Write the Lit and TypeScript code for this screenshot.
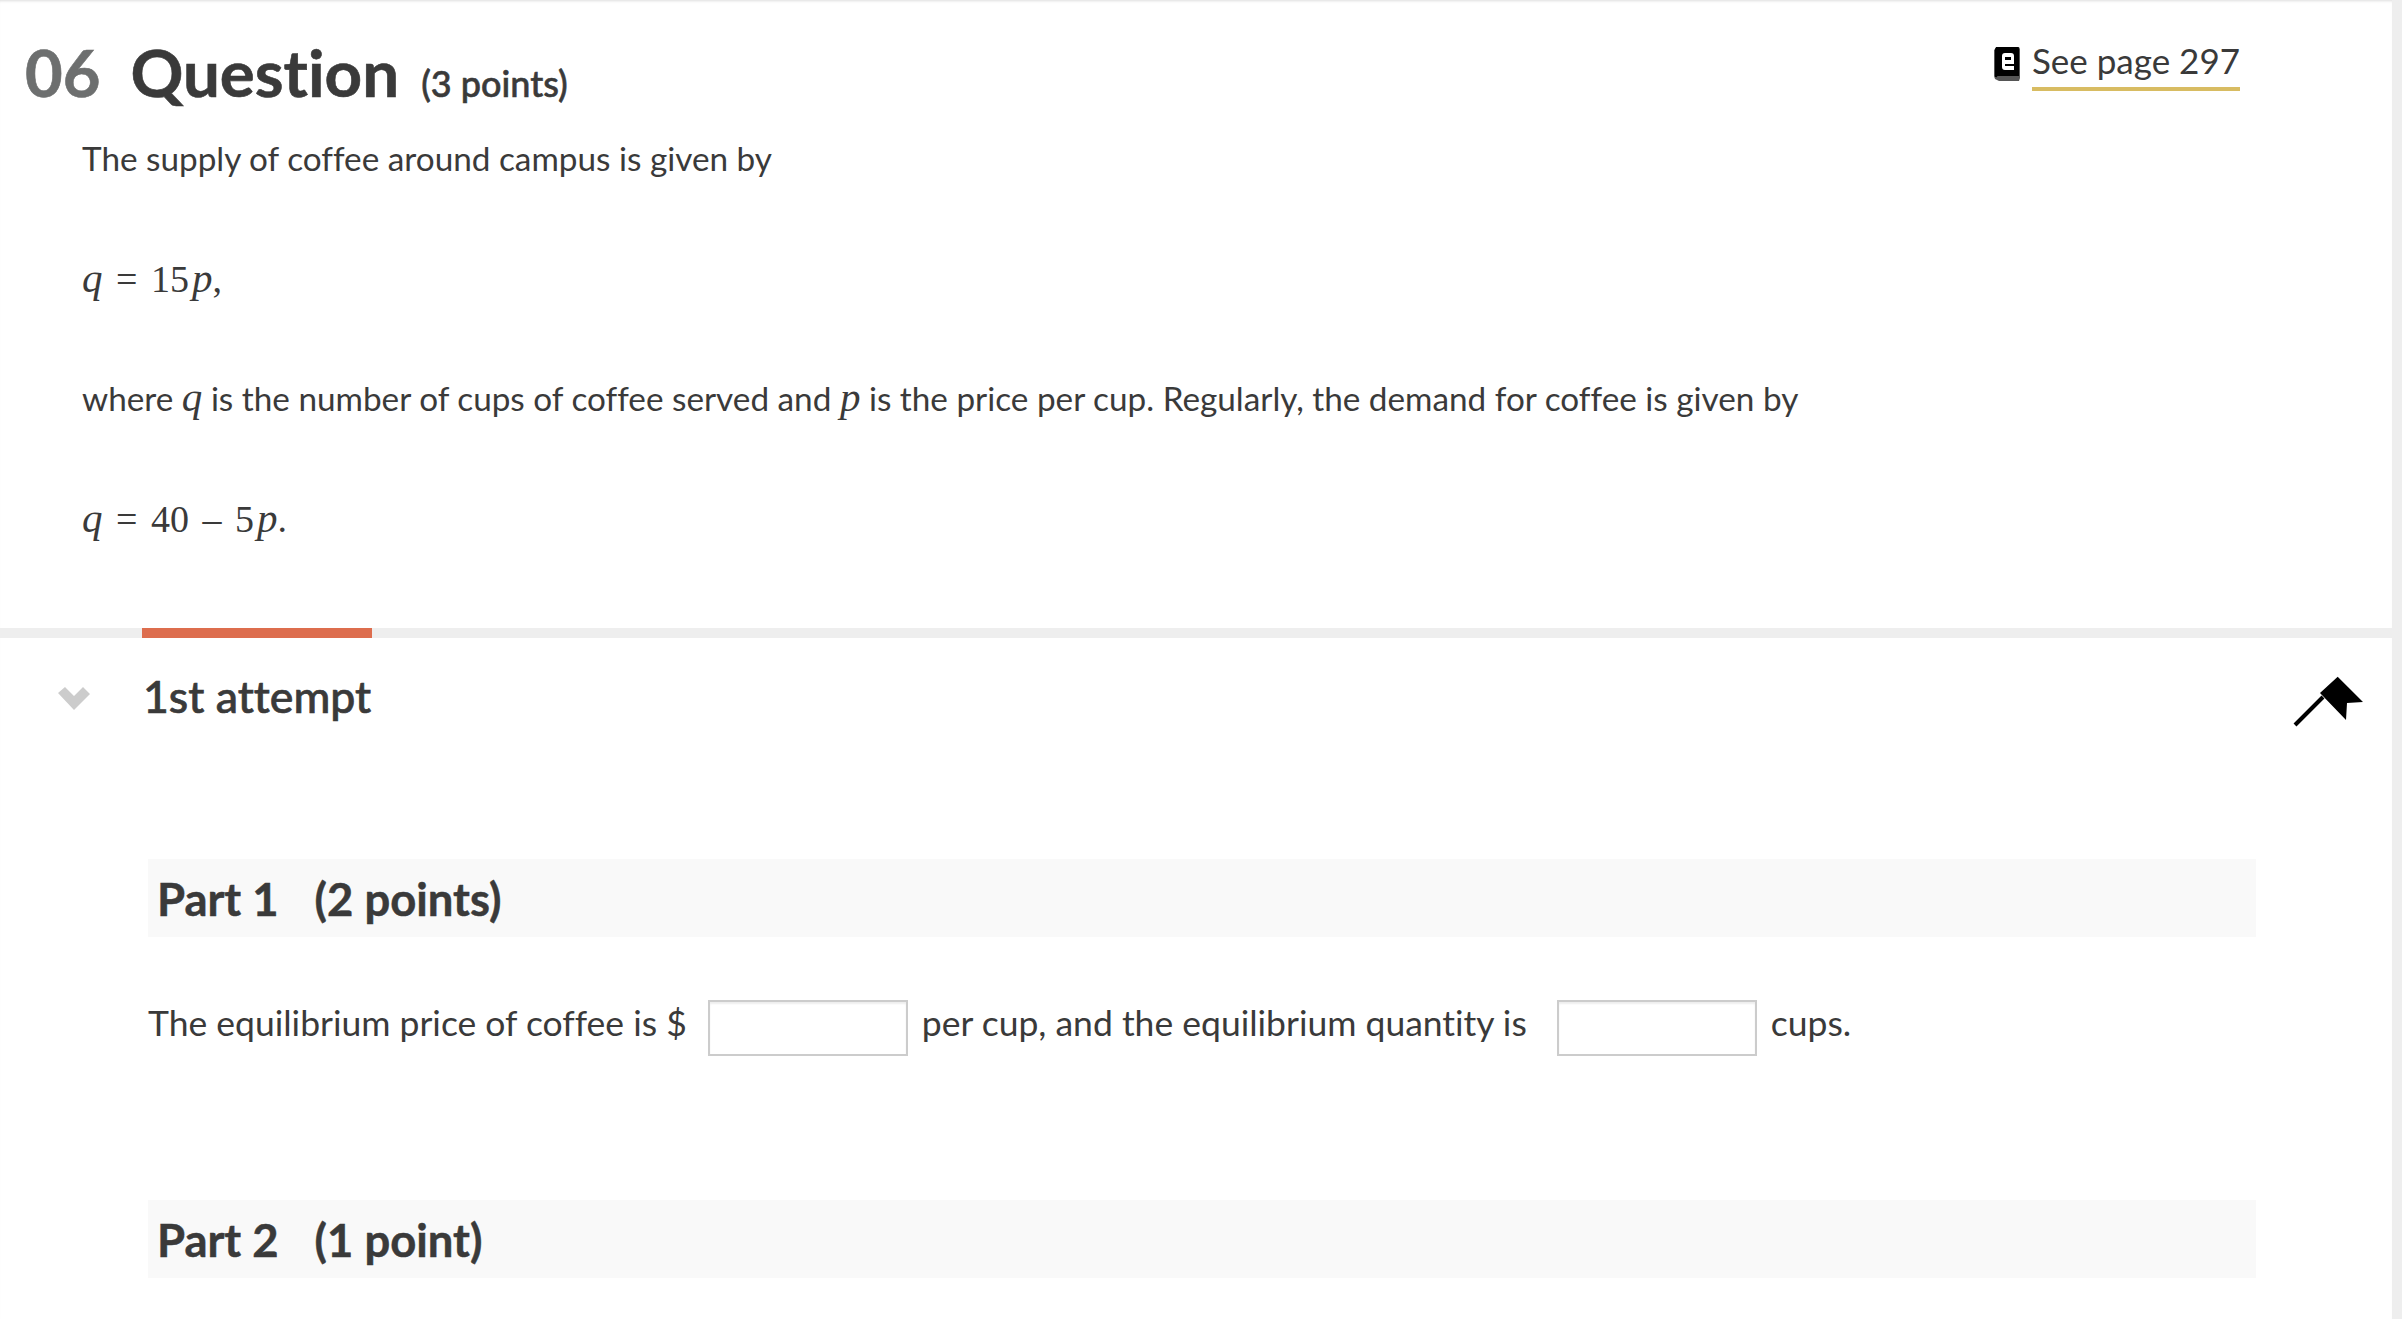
import { LitElement, html, css } from "lit";
import { customElement } from "lit/decorators.js";

@customElement("app-root")
export class AppRoot extends LitElement {
  static styles = css`
    :host { display: block; background: #fff; font-family: Lato, "Liberation Sans", sans-serif; color: #3a3a3a; height: 1319px; overflow: hidden; font-variant-ligatures: none; }
    .page { display: flex; height: 1319px; }
    .main { flex: 1; min-width: 0; display: flex; flex-direction: column; box-shadow: inset 0 3px 3px -2px #ddd; }
    .gutter { width: 10px; background: #eee; }
    .qhead { display: flex; justify-content: space-between; align-items: flex-start; height: 136px; padding-left: 25px; padding-right: 152px; }
    .qtitle { display: flex; align-items: baseline; margin-top: 33px; line-height: 78px; }
    .num { font-size: 65px; font-weight: 700; color: #6d6f6f; margin-right: 30px; -webkit-text-stroke: 0.6px #6d6f6f; }
    .q { font-size: 65.5px; font-weight: 700; margin-right: 22px; -webkit-text-stroke: 0.6px #3a3a3a; }
    .pts { font-size: 36px; font-weight: 500; -webkit-text-stroke: 0.6px #3a3a3a; }
    .see { display: flex; align-items: flex-start; margin-top: 37px; }
    .see svg { width: 27px; height: 34px; margin: 10px 11px 0 0; }
    .see span { font-size: 35px; line-height: 46px; padding-bottom: 4px; border-bottom: 4px solid #d8bc62; }
    .body { padding-left: 82px; font-size: 33.3px; }
    .body p { margin: 0; height: 120px; line-height: 44px; }
    .math { font-family: "Liberation Serif", serif; font-size: 38px; word-spacing: 4px; }
    .math .p { margin-left: 3px; }
    i { font-family: "Liberation Serif", serif; font-size: 41px; }
    .inl i { line-height: 0; }
    .bar { height: 10px; background: #eee; margin-top: 12px; padding-left: 142px; }
    .bar div { width: 230px; height: 10px; background: #dd6d4e; }
    .attempt { display: flex; align-items: center; height: 100px; box-sizing: border-box; padding-top: 15px; position: relative; padding-left: 58px; }
    .attempt .chev { width: 32px; height: 23px; margin-right: 53px; margin-top: 6px; }
    .attempt h2 { margin: 0; font-size: 44.6px; font-weight: 500; -webkit-text-stroke: 0.7px #3a3a3a; }
    .attempt .flag { position: absolute; left: 2291px; top: 34px; width: 76px; height: 58px; }
    .part { margin: 121px 136px 0 148px; height: 78px; background: #f9f9f9; display: flex; align-items: center; padding-left: 9px; font-size: 45.4px; font-weight: 700; -webkit-text-stroke: 0.5px #3a3a3a; }
    .part span { margin-right: 36px; }
    .part + .row { margin-top: 63px; }
    .row { display: flex; align-items: flex-start; height: 56px; margin-left: 148px; font-size: 35.5px; line-height: 45px; }
    .row input { width: 200px; height: 56px; box-sizing: border-box; border: 2px solid #ccc; box-shadow: inset 0 2px 2px #eee; background: #fff; padding: 0; outline: none; }
    .a { margin-right: 21px; }
    .b { margin: 0 30px 0 14px; }
    .row + .part { margin-top: 144px; }
  `;

  render() {
    return html`<div class="page">
      <div class="main">
        <div class="qhead">
          <div class="qtitle">
            <span class="num">06</span><span class="q">Question</span><span class="pts">(3 points)</span>
          </div>
          <div class="see">
            <svg viewBox="0 0 27 34">
              <path d="M3 0H25L26 2V31L25 34H5L1 32L0 29V3Z" fill="#555"/>
              <path d="M2 0H24Q25 0 25 2V29H4Q2 29 2 31Z M1 3Q1 0 3 0V30H1Z" fill="#000"/>
              <path d="M8 9Q8 6 11 6H17Q20 6 20 9V17H11V19H20V23H11Q8 23 8 20Z M11 10V13H17V10Z" fill="#fff" fill-rule="evenodd"/>
            </svg>
            <span>See page 297</span>
          </div>
        </div>
        <div class="body">
          <p>The supply of coffee around campus is given by</p>
          <p class="math"><i>q</i> = 15<i class="p">p</i>,</p>
          <p class="inl">where <i>q</i> is the number of cups of coffee served and <i>p</i> is the price per cup. Regularly, the demand for coffee is given by</p>
          <p class="math"><i>q</i> = 40 – 5<i class="p">p</i>.</p>
        </div>
        <div class="bar"><div></div></div>
        <div class="attempt">
          <svg class="chev" viewBox="0 0 32 23"><path d="M0 6L7 0L16 9L25 0L32 7L16 23Z" fill="#ccc"/></svg>
          <h2>1st attempt</h2>
          <svg class="flag" viewBox="0 0 76 58">
            <path d="M46.7 4.7L72 30L56 31L55 48L29 21Z" fill="#000"/>
            <path d="M4 53L32 25" stroke="#000" stroke-width="4" fill="none"/>
          </svg>
        </div>
        <div class="part"><span>Part 1</span>(2 points)</div>
        <div class="row">
          <span class="a">The equilibrium price of coffee is $</span>
          <input />
          <span class="b">per cup, and the equilibrium quantity is</span>
          <input />
          <span class="b">cups.</span>
        </div>
        <div class="part"><span>Part 2</span>(1 point)</div>
      </div>
      <div class="gutter"></div>
    </div>`;
  }
}
